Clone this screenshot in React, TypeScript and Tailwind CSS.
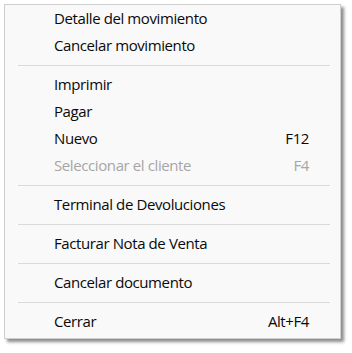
type Entry =
  | { kind: 'item'; label: string; shortcut?: string; disabled?: boolean }
  | { kind: 'sep' };

const entries: Entry[] = [
  { kind: 'item', label: 'Detalle del movimiento' },
  { kind: 'item', label: 'Cancelar movimiento' },
  { kind: 'sep' },
  { kind: 'item', label: 'Imprimir' },
  { kind: 'item', label: 'Pagar' },
  { kind: 'item', label: 'Nuevo', shortcut: 'F12' },
  { kind: 'item', label: 'Seleccionar el cliente', shortcut: 'F4', disabled: true },
  { kind: 'sep' },
  { kind: 'item', label: 'Terminal de Devoluciones' },
  { kind: 'sep' },
  { kind: 'item', label: 'Facturar Nota de Venta' },
  { kind: 'sep' },
  { kind: 'item', label: 'Cancelar documento' },
  { kind: 'sep' },
  { kind: 'item', label: 'Cerrar', shortcut: 'Alt+F4' },
];

const App = () => {
  return (
    <div className="w-[352px] h-[353px] bg-white pt-[4px] pl-[4px]">
      <div
        className="w-[337px] border border-[#cfcfcf] bg-[#f9f9f9] pt-0 pb-[3px] shadow-[3px_3px_3px_rgba(0,0,0,0.45)] text-[15px] tracking-[-0.4px] text-[#0a0a0a]"
        style={{ fontFamily: '"Open Sans", "Noto Sans", sans-serif' }}
      >
        {entries.map((e, i) =>
          e.kind === 'sep' ? (
            <div key={i} className="h-[12px] flex items-center pl-[13px] pr-[10px]">
              <div className="h-px w-full bg-[#dadada]" />
            </div>
          ) : (
            <div
              key={i}
              className={`h-[27px] flex items-center justify-between pl-[49px] pr-[31px] ${
                e.disabled ? 'text-[#a6a6a6]' : ''
              }`}
            >
              <span>{e.label}</span>
              {e.shortcut && <span>{e.shortcut}</span>}
            </div>
          )
        )}
      </div>
    </div>
  );
};

export default App;
